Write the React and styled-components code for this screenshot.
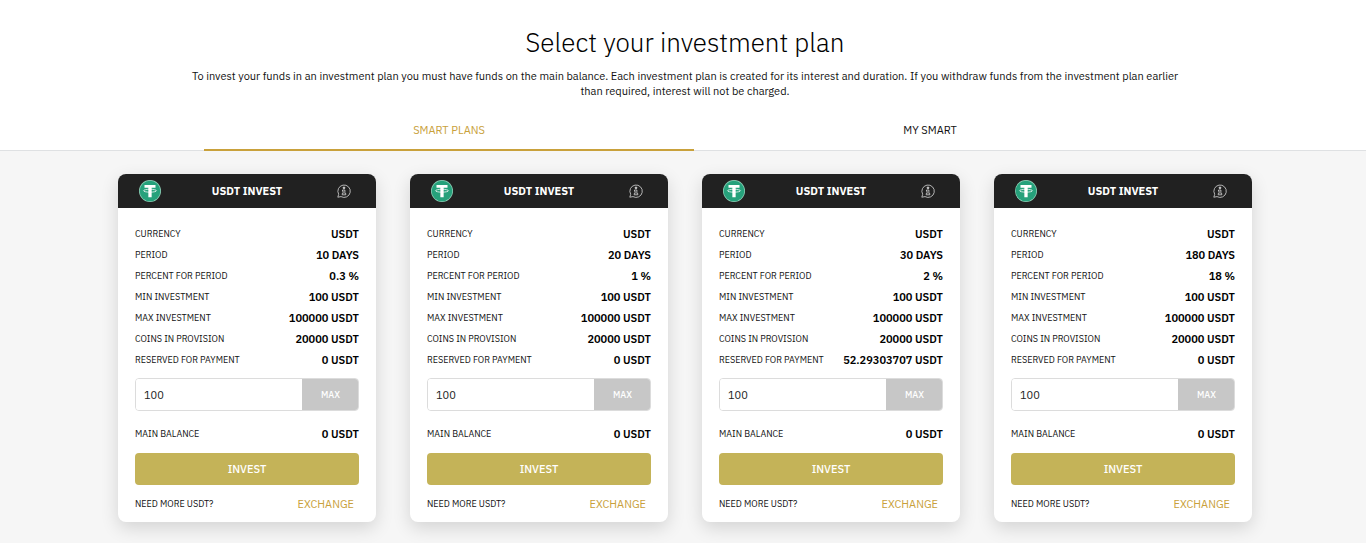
import React, { useState } from 'react';
import styled, { createGlobalStyle } from 'styled-components';

const GlobalStyle = createGlobalStyle`
  * { box-sizing: border-box; }
  body { margin: 0; background-color: #f6f6f6; color: #111; font-family: 'IBM Plex Sans', Roboto, 'Noto Sans', sans-serif; font-size: 11px; }
  button, input { font-family: inherit; }
`;

const Page = styled.div` padding-left: 4px; background-color: #f6f6f6;`;
const Top = styled.header` display: flex; flex-direction: column; align-items: center; margin-left: -4px; padding: 24px 0 0 4px; background-color: white; border-bottom: 1px solid #dfe1e3;`;
const Title = styled.h1` margin: 0; font-size: 26px; line-height: 36px; font-weight: 300; color: #000;`;
const Description = styled.p` max-width: 992px; margin: 9px 0 0; font-size: 11px; line-height: 15px; text-align: center;`;
const Tabs = styled.div` display: flex; width: 100%; max-width: 962px; margin: 11px 0 -1px;`;
const TabButton = styled.button` flex: 1 1 auto; height: 41px; padding: 0; border: 0; border-bottom: 2px solid ${props => props.$active ? '#c9a13b' : 'transparent'}; background: none; color: ${props => props.$active ? '#c9a13b' : '#111'}; font-size: 11px; cursor: pointer;`;

const PlanGrid = styled.main` display: grid; grid-template-columns: repeat(auto-fit, minmax(240px, 1fr)); gap: 34px; max-width: 1134px; margin: 0 auto; padding: 23px 0 21px;`;
const Card = styled.article` border-radius: 8px; background-color: white; box-shadow: 0 6px 18px rgba(0,0,0,0.14); overflow: hidden;`;
const CardHeader = styled.div` display: grid; grid-template-columns: 64px 1fr 64px; align-items: center; justify-items: center; height: 34px; background-color: #212121; color: white;`;
const CardTitle = styled.h2` margin: 0; font-size: 11px; line-height: 15px; font-weight: 700;`;
const InfoButton = styled.button` display: flex; padding: 0; border: 0; background: none; color: #d8d8d8; cursor: pointer;`;
const CardBody = styled.div` padding: 15px 17px 8px;`;
const Details = styled.dl` margin: 0;`;
const Row = styled.div` display: flex; align-items: center; justify-content: space-between; height: 21px;`;
const Label = styled.dt` font-size: 9px; color: #111;`;
const Value = styled.dd` margin: 0; font-size: 11px; font-weight: 600; color: #000;`;
const AmountField = styled.div` display: flex; height: 33px; margin: 8px 0 12px; border: 1px solid #dcdcdc; border-radius: 4px; overflow: hidden;`;
const AmountInput = styled.input` flex: 1; min-width: 0; padding: 0 8px; border: 0; background-color: white; color: #222; font-size: 11px; outline: none;`;
const MaxButton = styled.button` width: 57px; margin: -1px -1px -1px 0; padding: 0; border: 0; background-color: #c7c7c7; color: white; font-size: 9px; font-weight: 500; cursor: pointer;`;
const InvestButton = styled.button` display: block; width: 100%; height: 32px; margin: 9px 0 8px; padding: 0; border: 0; border-radius: 4px; background-color: #c4b358; color: white; font-size: 11px; font-weight: 500; cursor: pointer;`;
const Hint = styled.span` font-size: 9px; color: #111;`;
const ExchangeLink = styled.a` margin-right: 5px; color: #c9a13b; font-size: 11px; text-decoration: none;`;

const plans = [
    { id: 1, period: '10 DAYS', percent: '0.3 %', reserved: '0 USDT' },
    { id: 2, period: '20 DAYS', percent: '1 %', reserved: '0 USDT' },
    { id: 3, period: '30 DAYS', percent: '2 %', reserved: '52.29303707 USDT' },
    { id: 4, period: '180 DAYS', percent: '18 %', reserved: '0 USDT' },
];

function TetherIcon() {
    return (
        <svg width="22" height="22" viewBox="0 0 32 32" aria-hidden="true">
            <circle cx="16" cy="16" r="16" fill="#8fd0b8" />
            <circle cx="16" cy="16" r="15" fill="#26a17b" />
            <path fill="#fff" d="M8 7.2h16v4H18.4v14H13.6v-14H8Z" />
            <ellipse cx="16" cy="15.6" rx="9.4" ry="2.1" fill="none" stroke="#fff" strokeWidth="1.1" />
        </svg>
    );
}

function InfoIcon() {
    return (
        <svg width="14" height="14" viewBox="0 0 28 28" fill="none" stroke="currentColor" strokeWidth="1.6" strokeLinejoin="round" aria-hidden="true">
            <path d="M1.6 26.4 3.4 20.6A12.4 12.4 0 1 1 8 25.2Z" />
            <circle cx="14" cy="7.6" r="1.8" fill="currentColor" />
            <path d="M11 12h4.8v7.2h1.8v2.4h-7.2v-2.4h1.8v-4.8H11Z" />
        </svg>
    );
}

function PlanCard({ plan }) {
    const [amount, setAmount] = useState('100');
    const rows = [
        ['CURRENCY', 'USDT'],
        ['PERIOD', plan.period],
        ['PERCENT FOR PERIOD', plan.percent],
        ['MIN INVESTMENT', '100 USDT'],
        ['MAX INVESTMENT', '100000 USDT'],
        ['COINS IN PROVISION', '20000 USDT'],
        ['RESERVED FOR PAYMENT', plan.reserved],
    ];

    return (
        <Card>
            <CardHeader>
                <TetherIcon />
                <CardTitle>USDT INVEST</CardTitle>
                <InfoButton type="button" aria-label="Plan details"><InfoIcon /></InfoButton>
            </CardHeader>
            <CardBody>
                <Details>
                    {rows.map(([label, value]) => (
                        <Row key={label}>
                            <Label>{label}</Label>
                            <Value>{value}</Value>
                        </Row>
                    ))}
                </Details>
                <AmountField>
                    <AmountInput aria-label="Amount" value={amount} onChange={e => setAmount(e.target.value)} />
                    <MaxButton type="button" onClick={() => setAmount('0')}>MAX</MaxButton>
                </AmountField>
                <Details>
                    <Row>
                        <Label>MAIN BALANCE</Label>
                        <Value>0 USDT</Value>
                    </Row>
                </Details>
                <InvestButton type="button">INVEST</InvestButton>
                <Row>
                    <Hint>NEED MORE USDT?</Hint>
                    <ExchangeLink href="#exchange">EXCHANGE</ExchangeLink>
                </Row>
            </CardBody>
        </Card>
    );
}

function App() {
    const [tab, setTab] = useState('plans');

    return (
        <Page>
            <GlobalStyle />
            <Top>
                <Title>Select your investment plan</Title>
                <Description>
                    To invest your funds in an investment plan you must have funds on the main balance. Each investment plan is created for its interest and duration. If you withdraw funds from the investment plan earlier than required, interest will not be charged.
                </Description>
                <Tabs role="tablist">
                    <TabButton role="tab" aria-selected={tab === 'plans'} $active={tab === 'plans'} onClick={() => setTab('plans')}>SMART PLANS</TabButton>
                    <TabButton role="tab" aria-selected={tab === 'my'} $active={tab === 'my'} onClick={() => setTab('my')}>MY SMART</TabButton>
                </Tabs>
            </Top>
            <PlanGrid>
                {plans.map(plan => <PlanCard key={plan.id} plan={plan} />)}
            </PlanGrid>
        </Page>
    );
}

export default App;
